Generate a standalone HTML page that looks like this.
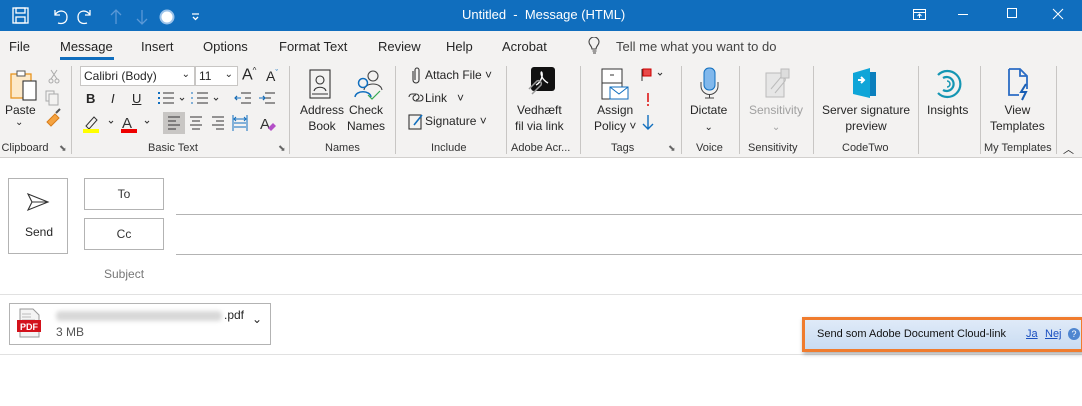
<!DOCTYPE html>
<html><head><meta charset="utf-8"><style>
*{margin:0;padding:0;box-sizing:border-box}
body{width:1082px;height:406px;overflow:hidden;background:#fff;font-family:"Liberation Sans",sans-serif;font-size:12px;color:#262626;position:relative}
.a{position:absolute;white-space:nowrap}
.t{font-size:13px}
.lbl{position:absolute;top:142px;font-size:11px;color:#333;text-align:center}
.sep{position:absolute;top:66px;width:1px;height:88px;background:#c8c6c4}
.big{position:absolute;text-align:center;font-size:12px;line-height:16px;color:#262626}
svg{position:absolute}
</style></head><body>
<!-- title bar -->
<div class="a" style="left:0;top:0;width:1082px;height:31px;background:#106ebe"></div>
<svg style="left:10px;top:6px" width="190" height="20" viewBox="0 0 190 20" fill="none" stroke="#fff" stroke-width="1.3">
<rect x="3" y="2" width="15" height="15"/><rect x="6" y="2" width="9" height="5"/><rect x="6" y="11" width="9" height="6"/>
<path d="M45 4v5h5M45 9c3-6 12-5 12 2s-6 7-9 6"/>
<path d="M80 4v5h-5M80 9c-3-6-12-5-12 2s6 7 9 6" />
<path d="M106 4v14M101 9l5-5 5 5" stroke="#5a98d6"/><path d="M132 4v14M127 13l5 5 5-5" stroke="#5a98d6"/>
<circle cx="157" cy="11" r="6.5" fill="#fff" stroke="#9cc3ea" stroke-width="2"/>
<path d="M182 8h7M183 11l2.5 2.5 2.5-2.5"/>
</svg>
<div class="a t" style="left:462px;top:7px;color:#fff">Untitled&nbsp; - &nbsp;Message (HTML)</div>
<svg style="left:910px;top:4px" width="172" height="22" viewBox="0 0 172 22" fill="none" stroke="#fff" stroke-width="1">
<rect x="3.5" y="5.5" width="12" height="10"/><path d="M3.5 8.5h12M9.5 14v-4M7.5 12l2-2 2 2"/>
<path d="M48 10.5h10"/><rect x="97.5" y="4.5" width="9" height="9"/><path d="M143 5l10 10M153 5l-10 10"/>
</svg>
<!-- tabs / ribbon bg -->
<div class="a" style="left:0;top:31px;width:1082px;height:127px;background:#f3f2f1"></div>
<div class="a" style="left:0;top:157px;width:1082px;height:1px;background:#d2d0ce"></div>
<div class="a t" style="left:9px;top:39px">File</div>
<div class="a t" style="left:60px;top:39px;color:#1f1f1f">Message</div>
<div class="a" style="left:60px;top:57px;width:54px;height:3px;background:#106ebe"></div>
<div class="a t" style="left:141px;top:39px">Insert</div>
<div class="a t" style="left:203px;top:39px">Options</div>
<div class="a t" style="left:279px;top:39px">Format Text</div>
<div class="a t" style="left:378px;top:39px">Review</div>
<div class="a t" style="left:446px;top:39px">Help</div>
<div class="a t" style="left:502px;top:39px">Acrobat</div>
<svg style="left:587px;top:37px" width="16" height="18" viewBox="0 0 16 18" fill="none" stroke="#444" stroke-width="1.1"><path d="M5 12c0-3-3-4-3-7a5 5 0 0 1 10 0c0 3-3 4-3 7zM5.5 14h4M6 16h3"/></svg>
<div class="a t" style="left:616px;top:39px;color:#444">Tell me what you want to do</div>

<!-- separators -->
<div class="sep" style="left:71px"></div><div class="sep" style="left:289px"></div><div class="sep" style="left:395px"></div><div class="sep" style="left:506px"></div><div class="sep" style="left:580px"></div><div class="sep" style="left:681px"></div><div class="sep" style="left:739px"></div><div class="sep" style="left:813px"></div><div class="sep" style="left:918px"></div><div class="sep" style="left:980px"></div><div class="sep" style="left:1056px"></div>

<!-- clipboard -->
<svg style="left:8px;top:67px" width="60" height="70" viewBox="0 0 60 70" fill="none">
<rect x="3" y="7" width="20" height="24" fill="#fde9c8" stroke="#e8941f" stroke-width="1.3"/><rect x="9" y="4" width="8" height="5" fill="#fff" stroke="#555"/>
<rect x="15" y="14" width="13" height="19" fill="#fff" stroke="#333" stroke-width="1.1"/>
<path d="M43 3l6 9M49 3l-6 9" stroke="#aaa"/><circle cx="43" cy="14" r="2" stroke="#aaa"/><circle cx="49" cy="14" r="2" stroke="#aaa"/>
<rect x="38" y="24" width="8" height="10" stroke="#aaa"/><rect x="41" y="27" width="9" height="11" fill="#f3f2f1" stroke="#aaa"/>
<path d="M39 55l8-8 4 4-8 8z" fill="#f5a340" stroke="#d87d1a"/><path d="M48 46l4-4" stroke="#555" stroke-width="2"/>
</svg>
<div class="big" style="left:5px;top:102px">Paste</div>
<div class="a" style="left:15px;top:117px;font-size:10px">⌄</div>
<div class="lbl" style="left:0;width:50px">Clipboard</div>
<div class="a" style="left:59px;top:143px;font-size:9px;color:#666">⬊</div>

<!-- basic text -->
<div class="a" style="left:80px;top:66px;width:115px;height:20px;background:#fff;border:1px solid #c8c6c4;padding:2px 3px;font-size:12px">Calibri (Body)<span style="position:absolute;right:4px;top:2px;font-size:10px">⌄</span></div>
<div class="a" style="left:195px;top:66px;width:43px;height:20px;background:#fff;border:1px solid #c8c6c4;padding:2px 3px">11<span style="position:absolute;right:4px;top:2px;font-size:10px">⌄</span></div>
<div class="a" style="left:242px;top:66px;font-size:16px">A<sup style="font-size:8px">^</sup></div>
<div class="a" style="left:266px;top:68px;font-size:14px">A<sup style="font-size:8px;color:#106ebe">ˇ</sup></div>
<div class="a" style="left:86px;top:91px;font-weight:bold;font-size:13px">B</div>
<div class="a" style="left:111px;top:91px;font-style:italic;font-size:13px">I</div>
<div class="a" style="left:132px;top:91px;text-decoration:underline;font-size:13px">U</div>
<svg style="left:155px;top:88px" width="130" height="50" viewBox="0 0 130 50" fill="none" stroke="#333">
<path d="M8 5h11M8 10h11M8 15h11"/><path d="M3 5h2M3 10h2M3 15h2" stroke="#106ebe" stroke-width="2"/><path d="M25 10l2 2 2-2"/>
<path d="M42 5h11M42 10h11M42 15h11"/><path d="M37 4v2M37 9v2M37 14v2" stroke="#106ebe"/><path d="M59 10l2 2 2-2"/>
<path d="M86 5h10M90 10h6M86 15h10M80 10h6M82 8l-2 2 2 2" /><path d="M80 10h6M82 8l-2 2 2 2" stroke="#106ebe"/>
<path d="M110 5h10M110 10h6M110 15h10M104 10h6M108 8l2 2-2 2" /><path d="M104 10h6M108 8l2 2-2 2" stroke="#106ebe"/>
</svg>
<svg style="left:82px;top:112px" width="200" height="24" viewBox="0 0 200 24" fill="none" stroke="#333">
<path d="M4 14l8-9 3 3-8 9z"/><rect x="1" y="17" width="16" height="4" fill="#ffff00" stroke="none"/><path d="M27 9l2 2 2-2"/>
<text x="40" y="16" font-size="15" fill="#333" stroke="none" font-family="Liberation Sans">A</text><rect x="39" y="17" width="16" height="4" fill="#e00" stroke="none"/><path d="M63 9l2 2 2-2"/>
<rect x="81" y="0" width="22" height="22" fill="#c8c6c4" stroke="none"/>
<path d="M86 5h12M86 9h8M86 13h12M86 17h8"/><path d="M108 5h12M110 9h8M108 13h12M110 17h8"/><path d="M130 5h12M134 9h8M130 13h12M134 17h8"/>
<path d="M151 3v16M165 3v16M152 7h12M154 5l-2 2 2 2M162 5l2 2-2 2M152 11h12M152 15h12" stroke="#106ebe"/>
<text x="178" y="17" font-size="15" fill="#333" stroke="none" font-family="Liberation Sans">A</text><path d="M186 16l5-5 3 3-5 5z" fill="#b34fc7" stroke="none"/>
</svg>
<div class="lbl" style="left:148px">Basic Text</div>
<div class="a" style="left:278px;top:143px;font-size:9px;color:#666">⬊</div>

<!-- names -->
<svg style="left:308px;top:69px" width="80" height="32" viewBox="0 0 80 32" fill="none" stroke="#333" stroke-width="1.1">
<rect x="2" y="1" width="20" height="28"/><circle cx="12" cy="11" r="4"/><path d="M6 22c1-5 11-5 12 0M4 25h16"/>
<circle cx="65" cy="7" r="5" stroke="#444"/><path d="M56 21c1-8 17-8 18 0" stroke="#444"/>
<circle cx="55" cy="14" r="4.5" stroke="#106ebe" stroke-width="1.5"/><path d="M47 28c1-7 15-7 16 0" stroke="#106ebe" stroke-width="1.5"/><path d="M60 26l4 4 8-8" stroke="#35a853" stroke-width="1.2"/>
</svg>
<div class="big" style="left:300px;top:102px">Address<br>Book</div>
<div class="big" style="left:347px;top:102px">Check<br>Names</div>
<div class="lbl" style="left:325px">Names</div>

<!-- include -->
<svg style="left:406px;top:67px" width="20" height="66" viewBox="0 0 20 66" fill="none" stroke="#333" stroke-width="1.1">
<path d="M7 4v9a3 3 0 0 0 6 0V3a2 2 0 0 0-4 0v10"/>
<path d="M3 30a3 3 0 0 1 3-3h4a3 3 0 0 1 0 6M14 28a3 3 0 0 1 3 3a3 3 0 0 1-3 3h-4a3 3 0 0 1 0-6"/>
<rect x="3" y="48" width="12" height="14"/><path d="M8 58l8-10" stroke="#106ebe" stroke-width="1.6"/>
</svg>
<div class="a" style="left:425px;top:68px">Attach File ˅</div>
<div class="a" style="left:425px;top:91px">Link &nbsp; ˅</div>
<div class="a" style="left:425px;top:114px">Signature ˅</div>
<div class="lbl" style="left:431px">Include</div>

<!-- adobe -->
<svg style="left:524px;top:67px" width="36" height="34" viewBox="0 0 36 34"><rect x="7" y="0" width="24" height="24" rx="3" fill="#111"/><path d="M12 18c4-2 7-8 6-12s-3 5 6 10" fill="none" stroke="#fff" stroke-width="1.4"/><path d="M5 22l8-8a3 3 0 0 1 4 4l-9 9" fill="none" stroke="#999" stroke-width="1.5"/></svg>
<div class="big" style="left:515px;top:102px">Vedhæft<br>fil via link</div>
<div class="lbl" style="left:511px">Adobe Acr...</div>

<!-- tags -->
<svg style="left:598px;top:67px" width="70" height="66" viewBox="0 0 70 66" fill="none" stroke="#333">
<rect x="4" y="2" width="20" height="30" fill="#fff"/><path d="M4 16h20M12 8h4"/><rect x="12" y="20" width="18" height="12" fill="#fff" stroke="#106ebe"/><path d="M12 20l9 7 9-7" stroke="#106ebe"/>
<path d="M44 2v12" /><rect x="45" y="2" width="8" height="7" fill="#e84a4a" stroke="#c00"/><path d="M60 6l2 2 2-2"/>
<path d="M50 26v9M50 37v2" stroke="#e03030" stroke-width="1.8"/>
<path d="M50 48v14M45 57l5 5 5-5" stroke="#106ebe" stroke-width="1.4"/>
</svg>
<div class="big" style="left:594px;top:102px">Assign<br>Policy ˅</div>
<div class="lbl" style="left:611px">Tags</div>
<div class="a" style="left:668px;top:143px;font-size:9px;color:#666">⬊</div>

<!-- voice -->
<svg style="left:698px;top:67px" width="24" height="34" viewBox="0 0 24 34" fill="none"><rect x="6" y="1" width="11" height="22" rx="5" fill="#81b8ec" stroke="#106ebe"/><path d="M3 15v4a8 8 0 0 0 17 0v-4M11.5 27v4M7 31h9" stroke="#444"/></svg>
<div class="big" style="left:690px;top:102px">Dictate<br><span style="font-size:10px">⌄</span></div>
<div class="lbl" style="left:696px">Voice</div>

<!-- sensitivity -->
<svg style="left:763px;top:67px" width="30" height="34" viewBox="0 0 30 34" fill="none" stroke="#bbb"><rect x="3" y="6" width="18" height="24" fill="#e6e6e6"/><path d="M8 22l10-12a3 3 0 0 1 4 4L12 26"/><rect x="18" y="2" width="8" height="9" fill="#ddd"/></svg>
<div class="big" style="left:749px;top:102px;color:#a0a0a0">Sensitivity<br><span style="font-size:10px">⌄</span></div>
<div class="lbl" style="left:748px">Sensitivity</div>

<!-- codetwo -->
<svg style="left:850px;top:67px" width="30" height="34" viewBox="0 0 30 34"><path d="M3 6l17-5v30L3 27z" fill="#0ea5d8"/><path d="M20 5h6v24h-6z" fill="#0b7fbd"/><path d="M8 13h6M11 10l3 3-3 3" fill="none" stroke="#fff" stroke-width="2"/></svg>
<div class="big" style="left:822px;top:102px">Server signature<br>preview</div>
<div class="lbl" style="left:842px">CodeTwo</div>

<!-- insights -->
<svg style="left:930px;top:67px" width="36" height="34" viewBox="0 0 36 34" fill="none" stroke="#1596b3" stroke-width="2.2"><path d="M8 8a13 13 0 1 1 0 18"/><path d="M13 11a7 7 0 1 1 0 12"/><path d="M17 14a3 3 0 1 1 0 6" stroke-width="1.5"/></svg>
<div class="big" style="left:927px;top:102px">Insights</div>

<!-- templates -->
<svg style="left:1004px;top:67px" width="30" height="34" viewBox="0 0 30 34" fill="none" stroke="#2b6cc4" stroke-width="1.8"><path d="M5 2h11l7 7v13M5 2v26h10M16 2v7h7"/><path d="M22 17l-5 8h5l-4 8" stroke="#1a5fb4" stroke-width="2"/></svg>
<div class="big" style="left:990px;top:102px">View<br>Templates</div>
<div class="lbl" style="left:984px">My Templates</div>
<div class="a" style="left:1063px;top:141px;font-size:11px">︿</div>

<!-- compose -->
<div class="a" style="left:8px;top:178px;width:60px;height:76px;border:1px solid #b3b3b3"></div>
<svg style="left:26px;top:191px" width="24" height="22" viewBox="0 0 24 22" fill="none" stroke="#333" stroke-width="1.1"><path d="M2 3l20 8-20 8 4-8zM6 11h16"/></svg>
<div class="a" style="left:25px;top:225px;font-size:12px">Send</div>
<div class="a" style="left:84px;top:178px;width:80px;height:32px;border:1px solid #b3b3b3;text-align:center;line-height:30px;color:#333">To</div>
<div class="a" style="left:84px;top:218px;width:80px;height:32px;border:1px solid #b3b3b3;text-align:center;line-height:30px;color:#333">Cc</div>
<div class="a" style="left:176px;top:214px;width:906px;height:1px;background:#b3b3b3"></div>
<div class="a" style="left:176px;top:254px;width:906px;height:1px;background:#b3b3b3"></div>
<div class="a" style="left:104px;top:267px;color:#777">Subject</div>
<div class="a" style="left:0;top:294px;width:1082px;height:1px;background:#e1e1e1"></div>
<div class="a" style="left:9px;top:303px;width:262px;height:42px;border:1px solid #b3b3b3"></div>
<svg style="left:16px;top:308px" width="26" height="30" viewBox="0 0 26 30"><path d="M4 1h13l6 6v22H4z" fill="#f4f4f4" stroke="#999"/><path d="M6 6h9M6 9h9M6 12h13" stroke="#bbb"/><rect x="1" y="12" width="24" height="12" fill="#d3121b"/><text x="13" y="22" font-size="9" font-weight="bold" fill="#fff" text-anchor="middle" font-family="Liberation Sans">PDF</text></svg>
<div class="a" style="left:56px;top:311px;width:166px;height:10px;background:#d8d8d8;filter:blur(2px);border-radius:4px"></div>
<div class="a" style="left:224px;top:308px">.pdf</div>
<div class="a" style="left:56px;top:325px;color:#555">3 MB</div>
<div class="a" style="left:252px;top:312px;font-size:12px">⌄</div>
<div class="a" style="left:0;top:354px;width:1082px;height:1px;background:#e1e1e1"></div>

<!-- adobe bar -->
<div class="a" style="left:802px;top:317px;width:282px;height:35px;border:3px solid #f07c2e;box-shadow:1px 2px 4px rgba(0,0,0,.35);background:linear-gradient(#dfeaf8,#c9dcf2)"></div>
<div class="a" style="left:817px;top:328px;font-size:11px;color:#111">Send som Adobe Document Cloud-link</div>
<div class="a" style="left:1026px;top:328px;font-size:11px;color:#1a4fc0;text-decoration:underline">Ja</div>
<div class="a" style="left:1045px;top:328px;font-size:11px;color:#1a4fc0;text-decoration:underline">Nej</div>
<div class="a" style="left:1068px;top:328px;width:12px;height:12px;border-radius:50%;background:#4f86d0;color:#fff;font-size:9px;text-align:center;line-height:12px">?</div>
</body></html>
